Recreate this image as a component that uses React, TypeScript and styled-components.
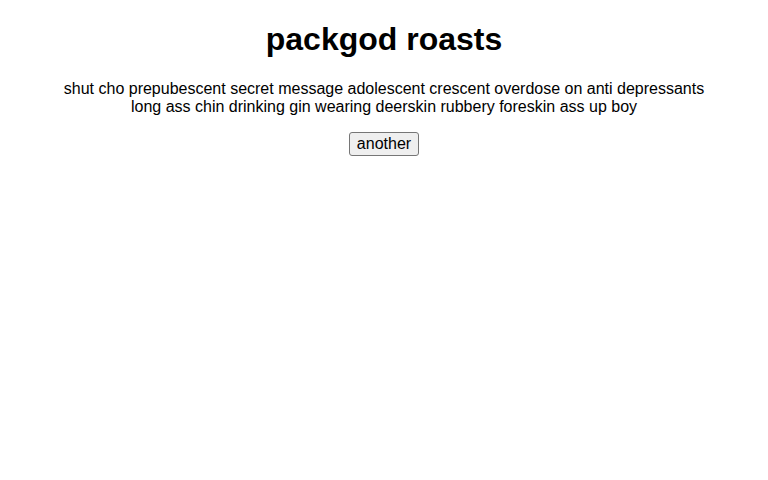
import React, { useState } from 'react';
import styled, { createGlobalStyle } from 'styled-components';

const GlobalStyle = createGlobalStyle`
    body {
        margin: 0 8px 8px;
        background: #ffffff;
        color: #000000;
        font-family: "Liberation Sans", Arial, sans-serif;
    }
`;

const Page = styled.main`
    text-align: center;
    padding-top: 21px;
`;

const Title = styled.h1`
    font-size: 32px;
    font-weight: bold;
    line-height: 37px;
    margin: 0 0 22px;
`;

const Roast = styled.p`
    font-size: 16px;
    line-height: 18px;
    margin: 0 0 16px;
`;

const AnotherButton = styled.button`
    font-family: "Liberation Sans", Arial, sans-serif;
    font-size: 16px;
    line-height: 18px;
    padding: 2px 7px;
    color: #000000;
    background: #efefef;
    border: 1px solid #767676;
    border-radius: 3px;
    cursor: pointer;
`;

const roasts = [
    [
        'shut cho prepubescent secret message adolescent crescent overdose on anti depressants',
        'long ass chin drinking gin wearing deerskin rubbery foreskin ass up boy',
    ],
];

export default function App() {
    const [index, setIndex] = useState(0);
    const lines = roasts[index];

    return (
        <Page>
            <GlobalStyle />
            <Title>packgod roasts</Title>
            <Roast>
                {lines[0]}
                <br />
                {lines[1]}
            </Roast>
            <AnotherButton onClick={() => setIndex((index + 1) % roasts.length)}>another</AnotherButton>
        </Page>
    );
}
